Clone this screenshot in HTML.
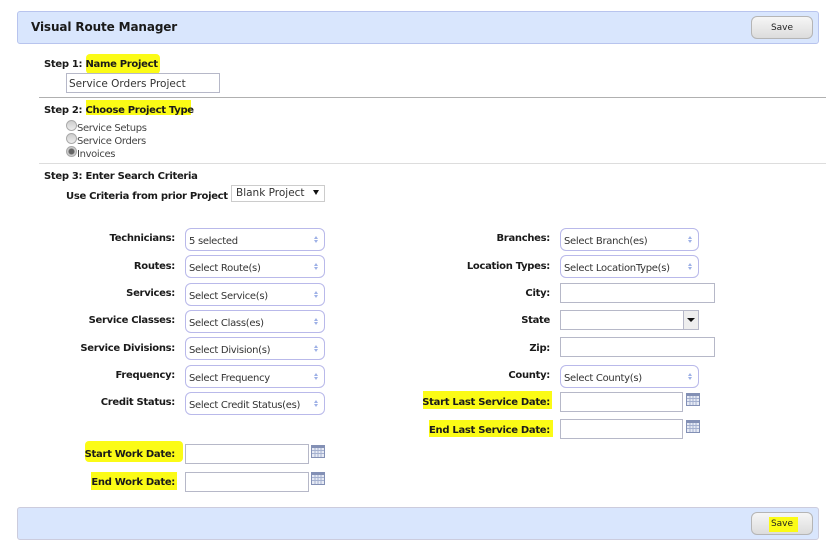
<!DOCTYPE html>
<html><head><meta charset="utf-8">
<style>
html,body{margin:0;padding:0;background:#fff}
#p{position:relative;width:838px;height:553px;overflow:hidden;background:#fff;font-family:"DejaVu Sans","Liberation Sans",sans-serif;color:#111}
#p div,#p svg{position:absolute;box-sizing:border-box}
.bar{left:17px;width:802px;height:33px;background:#d9e6fd;border:1px solid #b8c4ee;border-radius:3px}
.btn{left:751px;width:62px;height:23px;border:1px solid #b5b5b5;border-radius:6px;background:linear-gradient(#f6f6f6,#dcdcdc);font:9px/23px "DejaVu Sans",sans-serif;text-align:center;color:#222}
.hl{background:#fbfb16}
.l{font-weight:bold;font-size:10px;line-height:14px;white-space:nowrap;color:#1a1a1a;letter-spacing:-.3px;margin-top:1px}
.r{text-align:right}
.lr{left:0;width:175px}
.rr{left:350px;width:200px}
.s{height:23px;border:1px solid #b9b9ea;border-radius:6px;background:#fff;font:10px/25px "DejaVu Sans",sans-serif;padding-left:3px;color:#333;white-space:nowrap;letter-spacing:-.3px}
.s:before,.s:after{content:"";position:absolute;right:6px;width:0;height:0;border-left:2.5px solid transparent;border-right:2.5px solid transparent}
.s:before{top:7px;border-bottom:3px solid #9db0e6}
.s:after{top:11px;border-top:3px solid #9db0e6}
.sl{left:185px;width:140px}
.sr{left:560px;width:139px}
.i{height:20px;border:1px solid #b6b8c8;background:#fff}
.t{font-size:10px;line-height:13px;color:#444;white-space:nowrap;letter-spacing:-.35px}
.rad{left:66px;width:11px;height:11px;border-radius:50%;border:1px solid #aaa;background:linear-gradient(#ccc,#eee)}
</style></head><body><div id="p">

<div class="bar" style="top:11px"></div>
<div class="l" style="left:31px;top:18px;font-size:12px;line-height:17px;letter-spacing:-.13px">Visual Route Manager</div>
<div class="btn" style="top:16px">Save</div>

<div class="hl" style="left:86px;top:54px;width:74px;height:20px;border-radius:4px"></div>
<div class="l" style="left:44px;top:57px">Step 1: Name Project</div>
<div class="i" style="left:66px;top:73px;width:154px"></div>
<div class="t" style="left:69px;top:78px;font-size:10.5px;color:#333;letter-spacing:0">Service Orders Project</div>
<div style="left:39px;top:97px;width:787px;height:1px;background:#b0b0b0"></div>

<div class="hl" style="left:86px;top:100px;width:105px;height:15px"></div>
<div class="l" style="left:44px;top:103px">Step 2: Choose Project Type</div>
<div class="rad" style="top:120px"></div><div class="t" style="left:77px;top:122px">Service Setups</div>
<div class="rad" style="top:133px"></div><div class="t" style="left:77px;top:135px">Service Orders</div>
<div class="rad" style="top:146px;background:radial-gradient(circle,#666 0 2.5px,#ccc 3.5px)"></div><div class="t" style="left:77px;top:148px">Invoices</div>
<div style="left:39px;top:163px;width:787px;height:1px;background:#ddd"></div>

<div class="l" style="left:44px;top:169px">Step 3: Enter Search Criteria</div>
<div class="l" style="left:66px;top:189px">Use Criteria from prior Project</div>
<div style="left:231px;top:185px;width:94px;height:17px;border:1px solid #ccc;background:#fff;font-size:10.5px;line-height:15px;padding-left:4px;color:#333">Blank Project</div>
<div style="left:313px;top:190px;width:0;height:0;border-left:3px solid transparent;border-right:3px solid transparent;border-top:5px solid #111"></div>

<div class="l r lr" style="top:231px">Technicians:</div><div class="s sl" style="top:228px">5 selected</div>
<div class="l r lr" style="top:259px">Routes:</div><div class="s sl" style="top:255px">Select Route(s)</div>
<div class="l r lr" style="top:286px">Services:</div><div class="s sl" style="top:283px">Select Service(s)</div>
<div class="l r lr" style="top:313px">Service Classes:</div><div class="s sl" style="top:310px">Select Class(es)</div>
<div class="l r lr" style="top:341px">Service Divisions:</div><div class="s sl" style="top:337px">Select Division(s)</div>
<div class="l r lr" style="top:368px">Frequency:</div><div class="s sl" style="top:365px">Select Frequency</div>
<div class="l r lr" style="top:395px">Credit Status:</div><div class="s sl" style="top:392px">Select Credit Status(es)</div>

<div class="hl" style="left:85px;top:441px;width:98px;height:21px;border-radius:4px"></div>
<div class="l r lr" style="top:447px">Start Work Date:</div>
<div class="i" style="left:185px;top:444px;width:124px"></div>
<div class="hl" style="left:91px;top:472px;width:86px;height:18px"></div>
<div class="l r lr" style="top:475px">End Work Date:</div>
<div class="i" style="left:185px;top:472px;width:124px"></div>

<div class="l r rr" style="top:231px">Branches:</div><div class="s sr" style="top:228px">Select Branch(es)</div>
<div class="l r rr" style="top:259px">Location Types:</div><div class="s sr" style="top:255px">Select LocationType(s)</div>
<div class="l r rr" style="top:286px">City:</div><div class="i" style="left:560px;top:283px;width:155px"></div>
<div class="l r rr" style="top:313px">State</div>
<div class="i" style="left:560px;top:310px;width:139px"></div>
<div style="left:683px;top:310px;width:16px;height:20px;background:#eee;border:1px solid #b6b8c8"></div>
<div style="left:687px;top:318px;width:0;height:0;border-left:4px solid transparent;border-right:4px solid transparent;border-top:4px solid #111"></div>
<div class="l r rr" style="top:341px">Zip:</div><div class="i" style="left:560px;top:337px;width:155px"></div>
<div class="l r rr" style="top:368px">County:</div><div class="s sr" style="top:365px">Select County(s)</div>

<div class="hl" style="left:423px;top:391px;width:129px;height:18px"></div>
<div class="l r rr" style="top:395px">Start Last Service Date:</div>
<div class="i" style="left:560px;top:392px;width:123px"></div>
<div class="hl" style="left:429px;top:420px;width:124px;height:17px"></div>
<div class="l r rr" style="top:423px">End Last Service Date:</div>
<div class="i" style="left:560px;top:419px;width:123px"></div>

<svg style="left:311px;top:445px" width="14" height="13" viewBox="0 0 14 13"><rect width="14" height="13" fill="#8390b5"/><rect x="1" y="3" width="12" height="9" fill="#e6eaf4"/><path d="M1 5.5h12M1 8.5h12M4 3v9M7 3v9M10 3v9" stroke="#a5b1d0" fill="none"/></svg>
<svg style="left:311px;top:472px" width="14" height="13" viewBox="0 0 14 13"><rect width="14" height="13" fill="#8390b5"/><rect x="1" y="3" width="12" height="9" fill="#e6eaf4"/><path d="M1 5.5h12M1 8.5h12M4 3v9M7 3v9M10 3v9" stroke="#a5b1d0" fill="none"/></svg>
<svg style="left:686px;top:393px" width="14" height="13" viewBox="0 0 14 13"><rect width="14" height="13" fill="#8390b5"/><rect x="1" y="3" width="12" height="9" fill="#e6eaf4"/><path d="M1 5.5h12M1 8.5h12M4 3v9M7 3v9M10 3v9" stroke="#a5b1d0" fill="none"/></svg>
<svg style="left:686px;top:420px" width="14" height="13" viewBox="0 0 14 13"><rect width="14" height="13" fill="#8390b5"/><rect x="1" y="3" width="12" height="9" fill="#e6eaf4"/><path d="M1 5.5h12M1 8.5h12M4 3v9M7 3v9M10 3v9" stroke="#a5b1d0" fill="none"/></svg>

<div class="bar" style="top:507px;border-color:#ccd"></div>
<div class="btn" style="top:512px"></div>
<div class="hl" style="left:769px;top:517px;width:29px;height:15px"></div>
<div class="btn" style="top:512px;background:none;border-color:transparent">Save</div>
</div></body></html>
